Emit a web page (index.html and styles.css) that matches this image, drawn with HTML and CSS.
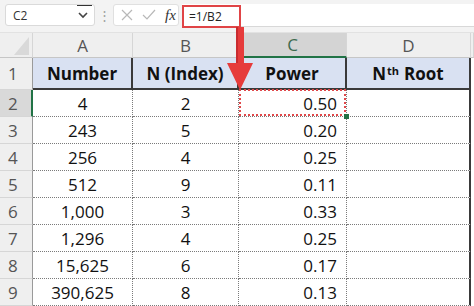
FILE: index.html
```html
<!DOCTYPE html>
<html lang="en">
<head>
    <meta charset="UTF-8">
    <title>Nth Root - Power</title>
    <link rel="stylesheet" href="styles.css">
</head>
<body>
    <div class="toolbar">
        <div class="namebox">
            <span>C2</span>
            <svg class="chevron" width="10" height="8" viewBox="0 0 10 8"><path d="M1 2 L5 6 L9 2" fill="none" stroke="#444" stroke-width="1.6"/></svg>
        </div>
        <div class="dots">&#8942;</div>
        <div class="fxbox">
            <svg width="12" height="12" viewBox="0 0 12 12"><path d="M1 1 L11 11 M11 1 L1 11" stroke="#b8b8b8" stroke-width="1.2"/></svg>
            <svg width="14" height="12" viewBox="0 0 14 12"><path d="M1 6 L5 10 L13 1" fill="none" stroke="#b8b8b8" stroke-width="1.2"/></svg>
            <span class="fx">fx</span>
        </div>
        <div class="formula">
            <span class="formula-text">=1/B2</span>
        </div>
    </div>

    <div class="sheet">
        <div class="corner"></div>
        <div class="col-head">A</div>
        <div class="col-head">B</div>
        <div class="col-head active">C</div>
        <div class="col-head">D</div>
        <div class="col-head"></div>

        <div class="row-head">1</div>
        <div class="cell title">Number</div>
        <div class="cell title">N (Index)</div>
        <div class="cell title">Power</div>
        <div class="cell title last">N<sup>th</sup> Root</div>
        <div class="blank"></div>

        <div class="row-head active">2</div>
        <div class="cell">4</div>
        <div class="cell">2</div>
        <div class="cell num selected">0.50</div>
        <div class="cell last"></div>
        <div class="blank"></div>

        <div class="row-head">3</div>
        <div class="cell">243</div>
        <div class="cell">5</div>
        <div class="cell num">0.20</div>
        <div class="cell last"></div>
        <div class="blank"></div>

        <div class="row-head">4</div>
        <div class="cell">256</div>
        <div class="cell">4</div>
        <div class="cell num">0.25</div>
        <div class="cell last"></div>
        <div class="blank"></div>

        <div class="row-head">5</div>
        <div class="cell">512</div>
        <div class="cell">9</div>
        <div class="cell num">0.11</div>
        <div class="cell last"></div>
        <div class="blank"></div>

        <div class="row-head">6</div>
        <div class="cell">1,000</div>
        <div class="cell">3</div>
        <div class="cell num">0.33</div>
        <div class="cell last"></div>
        <div class="blank"></div>

        <div class="row-head">7</div>
        <div class="cell">1,296</div>
        <div class="cell">4</div>
        <div class="cell num">0.25</div>
        <div class="cell last"></div>
        <div class="blank"></div>

        <div class="row-head">8</div>
        <div class="cell">15,625</div>
        <div class="cell">6</div>
        <div class="cell num">0.17</div>
        <div class="cell last"></div>
        <div class="blank"></div>

        <div class="row-head">9</div>
        <div class="cell">390,625</div>
        <div class="cell">8</div>
        <div class="cell num">0.13</div>
        <div class="cell last"></div>
        <div class="blank"></div>
    </div>

    <!-- callout arrow from the formula down to C2 -->
    <svg class="arrow" width="474" height="306" viewBox="0 0 474 306">
        <path d="M236 27 L244 27 L244 63 L253 63 L240 90 L227 63 L236 63 Z" fill="#e63b3b"/>
        <path d="M236 27 L238 27 L238 63 L236 63 Z" fill="#c92b2f"/>
    </svg>
</body>
</html>
```

FILE: styles.css
```css
* {
    margin: 0;
    padding: 0;
    box-sizing: border-box;
}

body {
    width: 474px;
    height: 306px;
    overflow: hidden;
    position: relative;
    background-color: #ffffff;
    font-family: 'Open Sans', 'Liberation Sans', sans-serif;
    color: #111;
}

/* formula bar */
.toolbar {
    height: 33px;
    display: flex;
    align-items: flex-start;
    padding: 4px 0 0 5px;
    background-color: #f3f3f3;
    border-bottom: 1px solid #e2e2e2;
}

.namebox {
    width: 90px;
    height: 22px;
    display: flex;
    align-items: center;
    justify-content: space-between;
    padding: 0 6px 0 7px;
    background-color: #fff;
    border: 1px solid #dadada;
    border-radius: 3px;
    font-size: 12px;
    color: #333;
    position: relative;
}

.namebox::before {
    content: "";
    position: absolute;
    top: 0;
    right: 2px;
    width: 15px;
    height: 1px;
    background-color: #333;
}

.dots {
    width: 18px;
    text-align: center;
    font-size: 13px;
    line-height: 22px;
    color: #a0a0a0;
}

.fxbox {
    width: 66px;
    height: 22px;
    display: flex;
    align-items: center;
    gap: 9px;
    padding-left: 7px;
    background-color: #fff;
    border: 1px solid #e0e0e0;
    border-radius: 3px;
}

.fx {
    font-family: 'Liberation Serif', serif;
    font-style: italic;
    font-size: 15px;
    color: #333;
}

.formula {
    flex: 1;
    height: 23px;
    margin-left: 3px;
    background-color: #fff;
    border-bottom: 1px solid #d8d8d8;
}

.formula-text {
    display: inline-block;
    width: 59px;
    height: 23px;
    padding-left: 5px;
    border: 2px solid #e04446;
    font-size: 12px;
    line-height: 19px;
    color: #222;
}

/* grid */
.sheet {
    display: grid;
    grid-template-columns: 33px 100px 106px 108px 124px 1fr;
    grid-template-rows: 25px 32px repeat(8, 27px);
}

.corner {
    background-color: #efefef;
    border-right: 1px solid #d6d6d6;
    border-bottom: 1px solid #c6c6c6;
    position: relative;
}

.corner::after {
    content: "";
    position: absolute;
    right: 3px;
    bottom: 2px;
    width: 15px;
    height: 18px;
    background-color: #d9d9d9;
    clip-path: polygon(100% 0, 100% 100%, 0 100%);
}

.col-head {
    background-color: #efefef;
    border-right: 1px solid #d6d6d6;
    border-bottom: 1px solid #c6c6c6;
    display: flex;
    align-items: center;
    justify-content: center;
    font-size: 17px;
    color: #555;
}

.col-head.active {
    background-color: #d4d4d4;
    color: #3d6b4f;
    border-bottom: 2px solid #217346;
}

.row-head {
    background-color: #efefef;
    border-right: 1px solid #9a9a9a;
    border-bottom: 1px solid #d6d6d6;
    display: flex;
    align-items: center;
    padding-left: 8px;
    font-size: 17px;
    color: #555;
}

.row-head.active {
    background-color: #d9d9d9;
    border-right: 2px solid #217346;
}

.cell {
    display: flex;
    align-items: center;
    justify-content: center;
    font-size: 17px;
    border-right: 1px dotted #7a7a7a;
    border-bottom: 1px dotted #7a7a7a;
    position: relative;
}

.cell.num {
    justify-content: flex-end;
    padding-right: 9px;
}

.cell.last {
    border-right: 2px solid #3a3a3a;
}

.cell.title {
    background-color: #d9e1f2;
    font-weight: 700;
    border-right: 2px solid #3a3a3a;
    border-bottom: 2px solid #3a3a3a;
}

.cell.title sup {
    font-size: 11px;
    line-height: 1;
    align-self: flex-start;
    margin: 7px 5px 0 1px;
}

.cell.selected::after {
    content: "";
    position: absolute;
    inset: -1px 0 0 0;
    border: 2px dotted #e0484a;
}

.cell.selected::before {
    content: "";
    position: absolute;
    right: -3px;
    bottom: -3px;
    width: 5px;
    height: 5px;
    background-color: #217346;
    z-index: 2;
}

.blank {
    background-color: #fff;
}

.arrow {
    position: absolute;
    left: 0;
    top: 0;
    pointer-events: none;
}
```
